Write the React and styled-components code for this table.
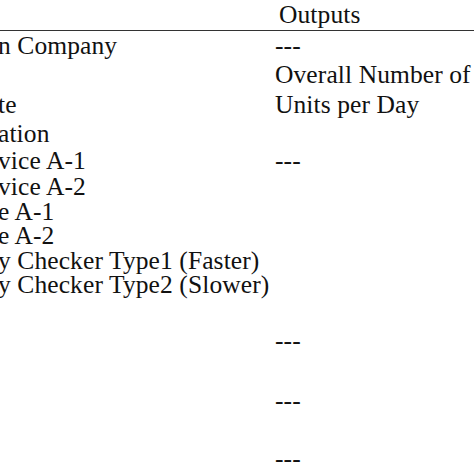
import React from "react";
import styled, { createGlobalStyle } from "styled-components";

const Global = createGlobalStyle`
  html, body {
    margin: 0;
    padding: 0;
    background: #fff;
    overflow: hidden;
  }
`;

const rows = [
  { left: "n Company", right: "---", h: 29 },
  { left: "", right: "Overall Number of", h: 30 },
  { left: "te", right: "Units per Day", h: 29 },
  { left: "ation", right: "", h: 28.5 },
  { left: "vice A-1", right: "---", h: 27 },
  { left: "vice A-2", right: "", h: 25 },
  { left: "e A-1", right: "", h: 24.5 },
  { left: "e A-2", right: "", h: 24 },
  { left: "y Checker Type1 (Faster)", right: "", h: 24.5 },
  { left: "y Checker Type2 (Slower)", right: "", h: 25 },
  { left: "", right: "---", h: 87 },
  { left: "", right: "---", h: 33 },
  { left: "", right: "---", h: 83 },
];

export default function App() {
  return (
    <>
      <Global />
      <Table>
        <Head>
          <Cell />
          <Cell>Outputs</Cell>
        </Head>
        {rows.map((r, i) => (
          <Row key={i} h={r.h}>
            <Cell>{r.left}</Cell>
            <Cell>{r.right}</Cell>
          </Row>
        ))}
      </Table>
    </>
  );
}

const Table = styled.div`
  width: 474px;
  height: 474px;
  overflow: hidden;
  font-family: "Liberation Serif", "Times New Roman", serif;
  font-size: 25.5px;
  letter-spacing: 0.1px;
  color: #111;
`;

const Row = styled.div`
  display: grid;
  grid-template-columns: 277px 1fr;
  align-items: center;
  height: ${(p) => p.h}px;
  margin-left: -2px;
`;

const Head = styled(Row)`
  height: 30px;
  border-bottom: 1.5px solid #333;
  margin-left: 0;
  padding-left: 2px;
`;

const Cell = styled.div`
  white-space: nowrap;
  line-height: 0.92;
`;
